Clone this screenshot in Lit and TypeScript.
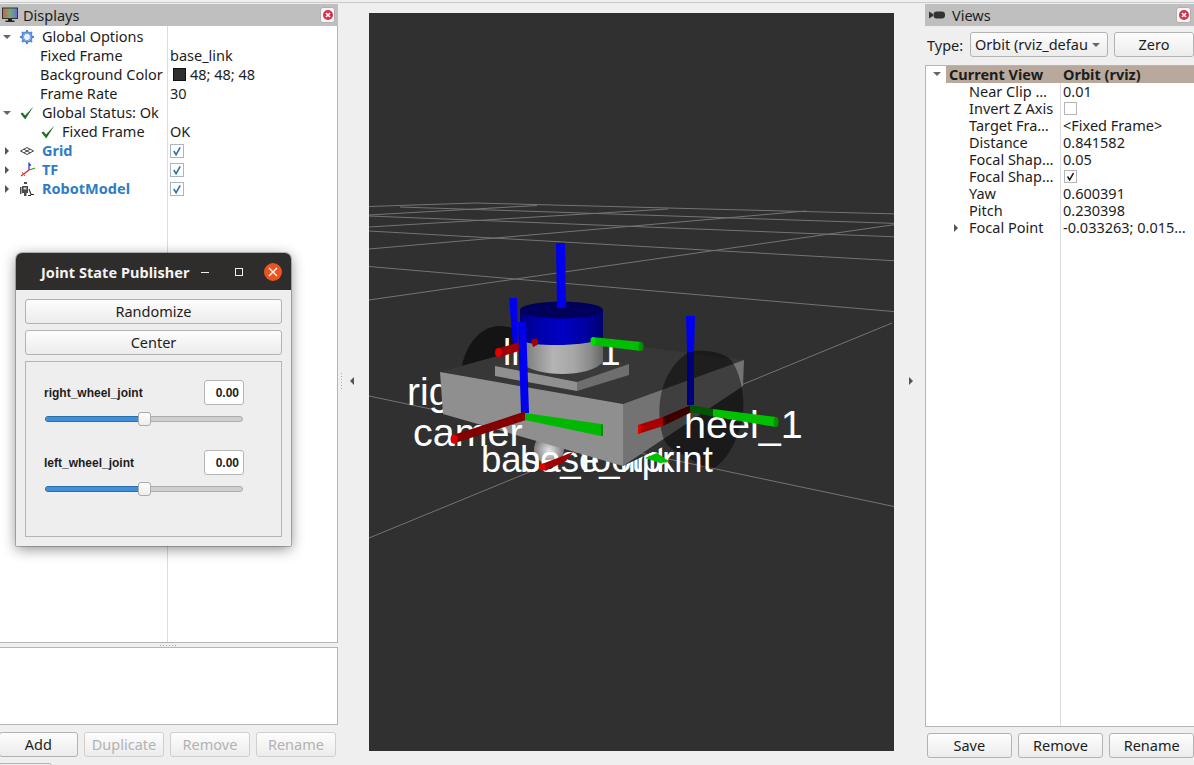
import { LitElement, html, css } from "lit";
import { customElement } from "lit/decorators.js";

const gear = html`<svg class="ic" viewBox="0 0 14 14"><circle cx="7" cy="7" r="4.3" fill="none" stroke="#4f86d2" stroke-width="2.8"/><path d="M7 0V3M7 11V14M0 7H3M11 7H14M2 2L4 4M10 10L12 12M2 12L4 10M10 4L12 2" stroke="#4f86d2" stroke-width="1.9"/><circle cx="7" cy="7" r="2.1" fill="#e6eefa"/><circle cx="7" cy="7" r="4" fill="none" stroke="#a9c6ec" stroke-width=".7"/></svg>`;
const check = html`<svg class="ic" viewBox="0 0 14 14"><path d="M0.500 7.500L2.500 6.500L5 9.500L13.500 0.500L5.200 13.500Z" fill="#1f6e1f"/></svg>`;
const gridI = html`<svg class="ic" viewBox="0 0 14 14"><path d="M7 3.500L13.500 7L7 10.500L0.500 7ZM3.800 5.200L10.200 8.800M10.200 5.200L3.800 8.800" fill="none" stroke="#444" stroke-width="1"/></svg>`;
const tfI = html`<svg class="ic wide" viewBox="0 0 16 16"><path d="M10 8V0.500M10 2L12 3.500" stroke="#2222dd" stroke-width="1.200" fill="none"/><path d="M10 8L16 6" stroke="#22aa22" stroke-width="1.200" fill="none"/><path d="M10 8L2 14" stroke="#dd2222" stroke-width="1.300" fill="none"/><path d="M3 10L6 14" stroke="#dd4444" stroke-width="1"/></svg>`;
const robotI = html`<svg class="ic wide" viewBox="0 0 16 16"><path d="M5 1H8V3H5ZM3 5H9V12H3ZM1 6H2.500V13H1ZM5 12H7.500V15H5Z" fill="#4a4a4a"/><path d="M10 8L12 13.500H15M9 14.500H12" stroke="#333" stroke-width="1.200" fill="none"/><rect x="4.500" y="6.500" width="3" height="2" fill="#cfd8e4"/></svg>`;
const monitor = html`<svg class="tic" viewBox="0 0 16 16"><defs><linearGradient id="scr" x1="0" x2="1"><stop offset="0" stop-color="#d45a5a"/><stop offset=".5" stop-color="#6fae6f"/><stop offset="1" stop-color="#6a6ad6"/></linearGradient></defs><rect x="0.500" y="1" width="15" height="10.500" fill="url(#scr)" stroke="#333"/><path d="M6 12H10V13.500H12.500V15H3.500V13.500H6Z" fill="#222"/></svg>`;
const camera = html`<svg class="tic cam" viewBox="0 0 16 16"><path d="M0 4.500L4 7V9L0 11.500Z" fill="#333"/><rect x="4.500" y="4.500" width="11.500" height="7" rx="3.200" fill="#333"/></svg>`;
const closeBtn = html`<span class="close"><svg viewBox="0 0 12 12"><circle cx="6" cy="6" r="5" fill="#d8324a"/><path d="M4 4L8 8M8 4L4 8" stroke="#fff" stroke-width="1.600"/></svg></span>`;
const tick = html`<svg viewBox="0 0 13 13"><path d="M3 6.500L5.500 10.500L10 2.500" fill="none" stroke="currentColor" stroke-width="1.700"/></svg>`;

const scene = html`<svg class="scene" viewBox="369 13 525 738" preserveAspectRatio="none">
  <defs>
    <linearGradient id="cylGray" x1="0" x2="1">
      <stop offset="0" stop-color="#6e6e6e"/><stop offset=".15" stop-color="#8c8c8c"/>
      <stop offset=".4" stop-color="#b4b4b4"/><stop offset=".65" stop-color="#a6a6a6"/>
      <stop offset=".85" stop-color="#8a8a8a"/><stop offset="1" stop-color="#666"/>
    </linearGradient>
    <linearGradient id="cylBlue" x1="0" x2="1">
      <stop offset="0" stop-color="#00007a"/><stop offset=".2" stop-color="#0000a8"/>
      <stop offset=".5" stop-color="#0000c4"/><stop offset=".8" stop-color="#0000a0"/>
      <stop offset="1" stop-color="#000070"/>
    </linearGradient>
    <radialGradient id="ball" cx=".5" cy=".55" r=".6">
      <stop offset="0" stop-color="#e4e4e4"/><stop offset="1" stop-color="#666"/>
    </radialGradient>
    <clipPath id="below"><path d="M369 414H443L623 466L665 446H894V500H369Z"/></clipPath>
  </defs>
  <g stroke="#747474" stroke-width="1" fill="none">
    <path d="M369 206.500L475 203M369 215L537 205.500M369 227L668 209M369 249L806 211M369 300L899 224"/>
    <path d="M475 203L899 214M400 207L899 223.500M369 216L899 237M369 231L899 261M369 266.500L899 312"/>
    <path d="M369 396L894 506.500M369 538L892 323"/>
  </g>
  <path d="M462 366C466 345 480 327 498 326C505 326 512 327 516 330L516 370Z" fill="#141414"/>
  <text x="407" y="405" font-size="39" font-family="'Liberation Sans',Arial,sans-serif" fill="#fff">rig</text>
  <circle cx="549" cy="449" r="15" fill="url(#ball)"/>
  <path d="M440 372L565 337L744 360L623 404Z" fill="#373737"/>
  <path d="M440 372L623 404L623 466L443 414Z" fill="#8f8f8f"/>
  <path d="M623 404L744 360L743 386L623 466Z" fill="#737373"/>
  <path d="M495 366L560 350L629 364L577 382Z" fill="#3a3a3a"/>
  <path d="M495 366L577 382L577 391L495 376Z" fill="#909090"/>
  <path d="M577 382L629 364L629 375L577 391Z" fill="#6e6e6e"/>
  <g font-family="'Liberation Sans',Arial,sans-serif" fill="#fff" font-size="37">
    <text x="503" y="365">li</text>
    <text x="600" y="365">1</text>
  </g>
  <path d="M520 340V362C535 378 590 378 603 362V340Z" fill="url(#cylGray)"/>
  <path d="M520 310V340C535 348 590 346 603 338V310Z" fill="url(#cylBlue)"/>
  <ellipse cx="561.500" cy="310" rx="41.500" ry="8.500" fill="#00005a"/>
  <path d="M556 243H565L566 308H557Z" fill="#0000ee"/>
  <path d="M509 298H517L518 345H513Z" fill="#0000ee"/>
  <path d="M537 338L531 340.500L533 347L538 344.500Z" fill="#a00000"/>
  <path d="M524 341L498 348.500L500 357L525 349Z" fill="#a00000"/>
  <ellipse cx="498.500" cy="352.500" rx="3.500" ry="4.500" fill="#e00000"/>
  <path d="M592 337L641 342V351L592 345Z" fill="#00bf00"/>
  <ellipse cx="593" cy="341" rx="2.500" ry="4" fill="#00e000"/>
  <ellipse cx="641" cy="346.500" rx="2.500" ry="4.500" fill="#008f00"/>
  <path d="M693 351C705 350 722 351 731 360C740 372 745 395 743 413C741 432 731 456 716 467C708 472 698 464 687 457C678 452 668 450 663 437C658 420 658 400 664 384C669 370 680 355 693 351Z" fill="#000" opacity=".45"/>
  <g clip-path="url(#below)">
    <g font-family="'Liberation Sans',Arial,sans-serif" fill="#fff" font-size="36.600">
      <text x="481" y="472">base_footprint</text>
      <text x="520" y="472">base_link</text>
    </g>
    <path d="M542 464L573 452L566 461L545 471Z" fill="#a00000"/>
    <circle cx="542.500" cy="467" r="3.500" fill="#e00000"/>
    <path d="M645 458L657 453L670 462L660 463Z" fill="#00c000"/>
  </g>
  <g font-family="'Liberation Sans',Arial,sans-serif" fill="#fff" font-size="39.500">
    <text x="413" y="446">camer</text>
    <text x="684" y="438">heel_1</text>
  </g>
  <path d="M518 322H526L529 413H521Z" fill="#0000ee"/>
  <path d="M525 411.500L453 435L455 443L526 420Z" fill="#820000"/>
  <ellipse cx="454" cy="439" rx="3.500" ry="4.500" fill="#e00000"/>
  <path d="M525 413L601 424V436L525 420Z" fill="#00b800"/>
  <path d="M601 424L603 424.500V436L601 436Z" fill="#009000"/>
  <path d="M686 316H695L694 352H687Z" fill="#0000ee"/>
  <path d="M687 352H694L694 405H687Z" fill="#00007a"/>
  <path d="M691 405L663 417V426L692 412Z" fill="#3c0000"/>
  <path d="M663 417L638 425V434L663 426Z" fill="#a80000"/>
  <path d="M638 425L641 424.500V433L638 434Z" fill="#e00000"/>
  <path d="M690 405L713 409V416.500L690 412Z" fill="#005500"/>
  <path d="M713 409L776 417V427L713 416.500Z" fill="#00c000"/>
  <ellipse cx="776" cy="422" rx="2.500" ry="5" fill="#009000"/>
</svg>`;

@customElement("app-root")
export class AppRoot extends LitElement {
  static styles = css`
    :host {
      display: block;
      width: 1194px;
      height: 765px;
      overflow: hidden;
      position: relative;
      background: #efefef;
      font-family: "Noto Sans", "Open Sans", sans-serif;
      font-size: 14.5px;
      color: #1d1d1d;
    }
    .rule { height: 1px; margin-top: 2px; background: #c9c9c9; }
    .main { display: flex; height: 762px; }
    .left { width: 338px; flex: none; padding-top: 1px; display: flex; flex-direction: column; }
    .right { flex: 1; min-width: 0; padding-top: 1px; display: flex; flex-direction: column; }
    .title { height: 22px; flex: none; background: #bfbfbf; display: flex; align-items: center; padding: 0 3px 0 0; gap: 5px; }
    .title .name { flex: 1; line-height: 24px; }
    .tic { width: 16px; height: 16px; margin-left: 2px; flex: none; }
    .tic.cam { margin-left: 4px; margin-right: 2px; }
    .close { width: 15px; height: 16px; background: #f6f6f6; border: 1px solid #b0b0b0; border-radius: 3px; box-sizing: border-box; display: flex; align-items: center; justify-content: center; }
    .close svg { width: 12px; height: 12px; }
    .tree {
      height: 617px; flex: none; padding-top: 1px; box-sizing: border-box;
      background: #fff linear-gradient(#dcdcdc, #dcdcdc) 167px 0 / 1px 100% no-repeat;
      border-right: 1px solid #b5b5b5; border-bottom: 1px solid #b5b5b5;
    }
    .row { display: grid; grid-template-columns: 168px 1fr; height: 19px; line-height: 19px; white-space: nowrap; }
    .lab { display: flex; align-items: center; position: relative; }
    .val { padding-left: 2px; display: flex; align-items: center; gap: 4px; }
    .p-top { padding-left: 42px; }
    .p-child { padding-left: 40px; }
    .p-check { padding-left: 62px; }
    .bold { font-weight: 700; color: #2f7cc6; }
    .ar { position: absolute; width: 0; height: 0; }
    .ar.d { left: 3px; top: 8px; border-left: 4px solid transparent; border-right: 4px solid transparent; border-top: 4px solid #666; }
    .ar.r { left: 5px; top: 6px; border-top: 4px solid transparent; border-bottom: 4px solid transparent; border-left: 4px solid #555; }
    .lab > .ic { position: absolute; left: 20px; top: 3px; width: 14px; height: 14px; }
    .lab > .ic.wide { width: 16px; height: 16px; left: 19px; top: 2px; }
    .p-check > .ic { left: 41px; }
    .swatch { width: 13px; height: 13px; margin-left: 3px; background: #303030; border: 1px solid #111; box-sizing: border-box; }
    .cb { width: 14px; height: 14px; box-sizing: border-box; border: 1px solid #aab6c6; background: #fff; color: #2a6db5; display: inline-flex; }
    .cb svg { width: 12px; height: 12px; }
    .sash { height: 4px; flex: none; display: flex; justify-content: center; align-items: center; }
    .sash i { width: 17px; height: 1px; background: repeating-linear-gradient(90deg, #aaa 0 1px, transparent 1px 3px); margin-left: -2px; }
    .log { height: 78px; flex: none; background: #fff; border: 1px solid #b5b5b5; border-left: none; box-sizing: border-box; }
    .btns { display: flex; gap: 6.6px; margin-top: 7px; flex: none; }
    .btn {
      height: 25px; box-sizing: border-box; border: 1px solid #b3b3b3; border-radius: 3px;
      background: linear-gradient(#fdfdfd, #ececec); display: flex; align-items: center; justify-content: center;
      color: #1d1d1d; flex: none; line-height: 1;
    }
    .btn.off { color: #b2b2b2; border-color: #cfcfcf; }
    .w84 { width: 84.6px; }
    .w79 { width: 79.4px; }
    .add { width: 78.7px; margin-left: -1px; }
    .stub { height: 12px; width: 52px; margin-top: 6px; margin-left: -2px; border: 1px solid #b3b3b3; border-radius: 3px; flex: none; }
    .split { width: 31px; flex: none; display: flex; align-items: center; padding-bottom: 6px; box-sizing: border-box; }
    .split.l { padding-left: 3px; gap: 8px; }
    .split.r { padding-left: 15px; }
    .dots { width: 1px; height: 17px; background: repeating-linear-gradient(#aaa 0 1px, transparent 1px 3px); }
    .tl { width: 0; height: 0; border-top: 4px solid transparent; border-bottom: 4px solid transparent; border-right: 4px solid #555; }
    .tr { width: 0; height: 0; border-top: 4px solid transparent; border-bottom: 4px solid transparent; border-left: 4px solid #555; }
    .view { width: 525px; flex: none; height: 738px; margin-top: 10px; background: #303030; }
    .scene { display: block; width: 525px; height: 738px; }
    .type { display: flex; align-items: center; margin-top: 6px; height: 25px; flex: none; padding-left: 2px; }
    .type .lb { width: 43px; flex: none; }
    .combo { width: 138px; justify-content: space-between; padding: 0 7px 0 4px; white-space: nowrap; }
    .combo .dn { border-left: 4px solid transparent; border-right: 4px solid transparent; border-top: 4px solid #666; flex: none; }
    .zero { width: 80px; margin-left: 6px; }
    .vtree {
      margin-top: 8px; height: 662px; flex: none; box-sizing: border-box;
      background: #fff linear-gradient(#dcdcdc, #dcdcdc) 134px 0 / 1px 100% no-repeat;
      border: 1px solid #b5b5b5; border-right: none;
    }
    .vrow { display: grid; grid-template-columns: 135px 1fr; height: 17px; line-height: 17px; white-space: nowrap; }
    .vrow .lab { padding-left: 43px; }
    .vrow .val { padding-left: 2px; }
    .vhead { background: linear-gradient(90deg, #fff 20px, #b9a99c 20px); font-weight: 700; }
    .vhead .lab { padding-left: 23px; }
    .vhead .ar.d { left: 7px; top: 6px; }
    .vrow .ar.r { left: 28px; top: 5px; }
    .vcb { width: 13px; height: 13px; margin-left: 1px; border: 1px solid #b5b5b5; box-sizing: border-box; color: #111; display: inline-flex; }
    .vcb svg { width: 11px; height: 11px; }
    .rbtns { margin-top: 6px; padding-left: 2px; }

    .win {
      position: absolute; left: 16px; top: 253px; width: 275px; height: 293px;
      display: flex; flex-direction: column; background: #eeeeee;
      border-radius: 6px 6px 1px 1px; box-shadow: 0 3px 14px rgba(0,0,0,.45), 0 0 0 1px rgba(0,0,0,.22);
    }
    .wt { height: 37px; flex: none; background: #2f2c2c; border-radius: 6px 6px 0 0; display: flex; align-items: center; color: #f3f3f3; font-weight: 700; padding-left: 25px; }
    .wt .tx { width: 160px; white-space: nowrap; letter-spacing: 0.05px; }
    .wmin { width: 8px; height: 1px; background: #eee; margin-top: 2px; }
    .wmax { width: 8px; height: 8px; border: 1px solid #eee; box-sizing: border-box; margin-left: 26px; }
    .wclose { width: 18px; height: 18px; border-radius: 50%; background: #e95420; margin-left: 21px; display: flex; align-items: center; justify-content: center; }
    .wclose svg { width: 10px; height: 10px; }
    .wb { flex: 1; display: flex; flex-direction: column; gap: 6px; padding: 9px; }
    .wb .btn { width: auto; }
    .group { flex: 1; border: 1px solid #b5b5b5; box-sizing: border-box; padding: 18px 37px 0 18px; display: flex; flex-direction: column; gap: 20px; }
    .joint { height: 50px; display: flex; flex-direction: column; }
    .jrow { display: flex; align-items: center; justify-content: space-between; height: 25px; font: 700 12px "Liberation Sans", Arial, sans-serif; }
    .num { width: 40px; height: 25px; box-sizing: border-box; background: #fff; border: 1px solid #b5b5b5; border-radius: 3px; display: flex; align-items: center; justify-content: flex-end; padding-right: 4px; }
    .slider { margin: 11px 1px 0 1px; height: 6px; position: relative; background: #cfcfcf; border: 1px solid #adadad; border-radius: 3px; box-sizing: border-box; }
    .fill { height: 100%; background: #3d8fd8; border-radius: 3px 0 0 3px; outline: 1px solid #2c6ea8; }
    .thumb { position: absolute; top: -5px; width: 13px; height: 14px; margin-left: -6px; background: linear-gradient(#fff, #ededed); border: 1px solid #ababab; border-radius: 3px; box-sizing: border-box; }
  `;

  private dispRow(cls: string, label: unknown, val: unknown, ar = "", icon: unknown = null, bold = false) {
    return html`<div class="row"><div class="lab ${cls} ${bold ? "bold" : ""}">${ar ? html`<span class="ar ${ar}"></span>` : null}${icon}<span>${label}</span></div><div class="val">${val}</div></div>`;
  }

  private vRow(label: string, val: unknown, ar = false) {
    return html`<div class="vrow"><div class="lab">${ar ? html`<span class="ar r"></span>` : null}${label}</div><div class="val">${val}</div></div>`;
  }

  private joint(name: string, pct: number) {
    return html`<div class="joint"><div class="jrow"><span>${name}</span><span class="num">0.00</span></div><div class="slider"><div class="fill" style="width:${pct}%"></div><div class="thumb" style="left:${pct}%"></div></div></div>`;
  }

  render() {
    const cb = html`<span class="cb">${tick}</span>`;
    return html`
      <div class="rule"></div>
      <div class="main">
        <div class="left">
          <div class="title">${monitor}<span class="name">Displays</span>${closeBtn}</div>
          <div class="tree">
            ${this.dispRow("p-top", "Global Options", "", "d", gear)}
            ${this.dispRow("p-child", "Fixed Frame", "base_link")}
            ${this.dispRow("p-child", "Background Color", html`<span class="swatch"></span><span>48; 48; 48</span>`)}
            ${this.dispRow("p-child", "Frame Rate", "30")}
            ${this.dispRow("p-top", "Global Status: Ok", "", "d", check)}
            ${this.dispRow("p-check", "Fixed Frame", "OK", "", check)}
            ${this.dispRow("p-top", "Grid", cb, "r", gridI, true)}
            ${this.dispRow("p-top", "TF", cb, "r", tfI, true)}
            ${this.dispRow("p-top", "RobotModel", cb, "r", robotI, true)}
          </div>
          <div class="sash"><i></i></div>
          <div class="log"></div>
          <div class="btns">
            <div class="btn add">Add</div>
            <div class="btn off w79">Duplicate</div>
            <div class="btn off w79">Remove</div>
            <div class="btn off w79">Rename</div>
          </div>
          <div class="stub"></div>
        </div>
        <div class="split l"><span class="dots"></span><span class="tl"></span></div>
        <div class="view">${scene}</div>
        <div class="split r"><span class="tr"></span></div>
        <div class="right">
          <div class="title">${camera}<span class="name">Views</span>${closeBtn}</div>
          <div class="type"><span class="lb">Type:</span>
            <div class="btn combo"><span>Orbit (rviz_defau</span><span class="dn"></span></div>
            <div class="btn zero">Zero</div>
          </div>
          <div class="vtree">
            <div class="vrow vhead"><div class="lab"><span class="ar d"></span>Current View</div><div class="val">Orbit (rviz)</div></div>
            ${this.vRow("Near Clip …", "0.01")}
            ${this.vRow("Invert Z Axis", html`<span class="vcb"></span>`)}
            ${this.vRow("Target Fra…", "<Fixed Frame>")}
            ${this.vRow("Distance", "0.841582")}
            ${this.vRow("Focal Shap…", "0.05")}
            ${this.vRow("Focal Shap…", html`<span class="vcb">${tick}</span>`)}
            ${this.vRow("Yaw", "0.600391")}
            ${this.vRow("Pitch", "0.230398")}
            ${this.vRow("Focal Point", "-0.033263; 0.015…", true)}
          </div>
          <div class="btns rbtns">
            <div class="btn w84">Save</div>
            <div class="btn w84">Remove</div>
            <div class="btn w84">Rename</div>
          </div>
        </div>
      </div>
      <div class="win">
        <div class="wt"><span class="tx">Joint State Publisher</span><span class="wmin"></span><span class="wmax"></span><span class="wclose"><svg viewBox="0 0 10 10"><path d="M1 1L9 9M9 1L1 9" stroke="#fff" stroke-width="1.300"/></svg></span></div>
        <div class="wb">
          <div class="btn">Randomize</div>
          <div class="btn">Center</div>
          <div class="group">
            ${this.joint("right_wheel_joint", 50)}
            ${this.joint("left_wheel_joint", 50)}
          </div>
        </div>
      </div>
    `;
  }
}
